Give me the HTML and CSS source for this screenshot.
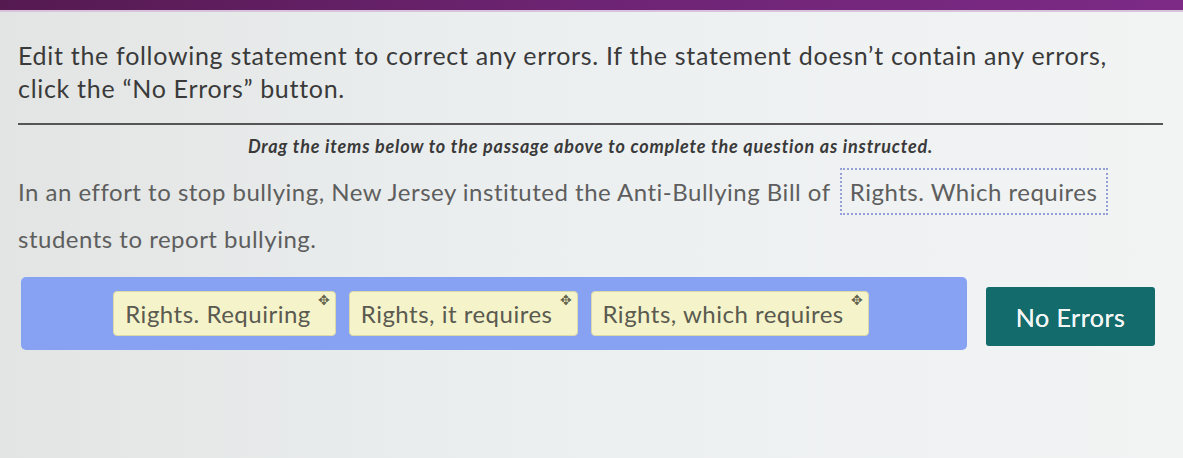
FILE: index.html
```html
<!DOCTYPE html>
<html>
<head>
<meta charset="utf-8">
<link rel="stylesheet" href="styles.css">
</head>
<body>
<div class="topbar"></div>
<main class="page">
  <p class="prompt">Edit the following statement to correct any errors. If the statement doesn’t contain any errors, click the “No Errors” button.</p>
  <hr class="rule">
  <p class="instruction">Drag the items below to the passage above to complete the question as instructed.</p>
  <p class="passage">In an effort to stop bullying, New Jersey instituted the Anti-Bullying Bill of <span class="drop">Rights. Which requires</span> students to report bullying.</p>
  <div class="answer-row">
    <div class="bank">
      <div class="tile">Rights. Requiring<span class="move">✥</span></div>
      <div class="tile">Rights, it requires<span class="move">✥</span></div>
      <div class="tile">Rights, which requires<span class="move">✥</span></div>
    </div>
    <button class="no-errors">No Errors</button>
  </div>
</main>
</body>
</html>
```
FILE: styles.css
```css
html, body {
  margin: 0;
  padding: 0;
}
body {
  background: linear-gradient(90deg, #e2e5e3 0%, #eceff0 45%, #f2f4f4 100%);
  font-family: "Source Sans Pro", Lato, "Noto Sans", sans-serif;
  width: 1183px;
  height: 458px;
  overflow: hidden;
}
.topbar {
  height: 10px;
  background: linear-gradient(90deg, #551a50 0%, #6e2474 50%, #7c2a86 100%);
  border-bottom: 2px solid #d9c2dc;
}
.page {
  padding: 0 20px 0 18px;
}
.prompt {
  margin: 27px 0 0;
  padding-right: 30px;
  font-size: 25px;
  letter-spacing: 0.7px;
  line-height: 33px;
  color: #3a3a3a;
}
.rule {
  margin: 18px 0 0;
  border: 0;
  height: 2px;
  background: #555;
}
.instruction {
  margin: 10px 0 0;
  text-align: center;
  font-size: 18px;
  letter-spacing: 0.8px;
  font-weight: 700;
  font-style: italic;
  color: #3a3a3a;
  line-height: 22px;
}
.passage {
  margin: 11px 0 0;
  font-size: 24px;
  letter-spacing: 0.5px;
  line-height: 47px;
  color: #5e5e5e;
}
.drop {
  display: inline-block;
  line-height: 43px;
  margin-left: 3px;
  padding: 0 9px 0 8px;
  border: 2px dotted #939fd6;
}
.answer-row {
  margin-top: 15px;
  margin-left: 3px;
  display: flex;
  align-items: flex-start;
  gap: 19px;
}
.bank {
  width: 946px;
  height: 73px;
  background: #88a2f3;
  border-radius: 5px;
  display: flex;
  align-items: center;
  justify-content: center;
  gap: 13px;
  box-sizing: border-box;
  padding-right: 6px;
}
.tile {
  position: relative;
  height: 45px;
  box-sizing: border-box;
  padding: 0 24px 0 11px;
  background: #f5f3c9;
  border: 1px solid #dcd9a8;
  border-radius: 4px;
  display: flex;
  align-items: center;
  font-size: 24px;
  letter-spacing: 0.5px;
  color: #5a5a50;
}
.move {
  position: absolute;
  top: 1px;
  right: 5px;
  font-size: 14px;
  line-height: 14px;
  letter-spacing: 0;
  color: #66664f;
}
.no-errors {
  margin-top: 10px;
  width: 169px;
  height: 59px;
  background: #136b6b;
  color: #f4f6f6;
  border: 0;
  border-radius: 3px;
  font-family: inherit;
  font-size: 25px;
  letter-spacing: 0.5px;
  text-shadow: 0 0 0.6px #f4f6f6;
}
```
